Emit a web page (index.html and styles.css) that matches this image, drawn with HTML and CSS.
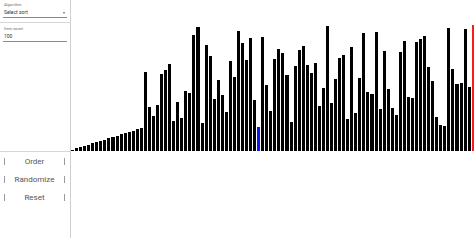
FILE: index.html
```html
<!DOCTYPE html>
<html>
<head>
<meta charset="utf-8">
<link rel="stylesheet" href="styles.css">
</head>
<body>
<div class="app">
  <aside class="side">
    <div class="settings">
      <div class="field first">
        <div class="label">Algorithm</div>
        <div class="control"><span>Select sort</span><span class="arrow"></span></div>
      </div>
      <div class="field second">
        <div class="label">Item count</div>
        <div class="control"><span>100</span></div>
      </div>
    </div>
    <div class="actions">
      <div class="row"><button class="btn">Order</button></div>
      <div class="row"><button class="btn">Randomize</button></div>
      <div class="row"><button class="btn">Reset</button></div>
    </div>
  </aside>
  <main class="main">
    <div class="chart">
      <div class="bar" style="height:1px"></div>
      <div class="bar" style="height:3px"></div>
      <div class="bar" style="height:4px"></div>
      <div class="bar" style="height:5px"></div>
      <div class="bar" style="height:6px"></div>
      <div class="bar" style="height:8px"></div>
      <div class="bar" style="height:9px"></div>
      <div class="bar" style="height:10px"></div>
      <div class="bar" style="height:11px"></div>
      <div class="bar" style="height:13px"></div>
      <div class="bar" style="height:14px"></div>
      <div class="bar" style="height:15px"></div>
      <div class="bar" style="height:17px"></div>
      <div class="bar" style="height:18px"></div>
      <div class="bar" style="height:19px"></div>
      <div class="bar" style="height:20px"></div>
      <div class="bar" style="height:22px"></div>
      <div class="bar" style="height:23px"></div>
      <div class="bar" style="height:79px"></div>
      <div class="bar" style="height:44px"></div>
      <div class="bar" style="height:35px"></div>
      <div class="bar" style="height:46px"></div>
      <div class="bar" style="height:77px"></div>
      <div class="bar" style="height:81px"></div>
      <div class="bar" style="height:87px"></div>
      <div class="bar" style="height:30px"></div>
      <div class="bar" style="height:49px"></div>
      <div class="bar" style="height:33px"></div>
      <div class="bar" style="height:60px"></div>
      <div class="bar" style="height:58px"></div>
      <div class="bar" style="height:116px"></div>
      <div class="bar" style="height:124px"></div>
      <div class="bar" style="height:28px"></div>
      <div class="bar" style="height:106px"></div>
      <div class="bar" style="height:95px"></div>
      <div class="bar" style="height:52px"></div>
      <div class="bar" style="height:71px"></div>
      <div class="bar" style="height:56px"></div>
      <div class="bar" style="height:39px"></div>
      <div class="bar" style="height:90px"></div>
      <div class="bar" style="height:74px"></div>
      <div class="bar" style="height:120px"></div>
      <div class="bar" style="height:108px"></div>
      <div class="bar" style="height:91px"></div>
      <div class="bar" style="height:113px"></div>
      <div class="bar" style="height:51px"></div>
      <div class="bar current" style="height:24px"></div>
      <div class="bar" style="height:114px"></div>
      <div class="bar" style="height:66px"></div>
      <div class="bar" style="height:40px"></div>
      <div class="bar" style="height:92px"></div>
      <div class="bar" style="height:102px"></div>
      <div class="bar" style="height:98px"></div>
      <div class="bar" style="height:76px"></div>
      <div class="bar" style="height:29px"></div>
      <div class="bar" style="height:85px"></div>
      <div class="bar" style="height:101px"></div>
      <div class="bar" style="height:105px"></div>
      <div class="bar" style="height:86px"></div>
      <div class="bar" style="height:78px"></div>
      <div class="bar" style="height:88px"></div>
      <div class="bar" style="height:45px"></div>
      <div class="bar" style="height:63px"></div>
      <div class="bar" style="height:125px"></div>
      <div class="bar" style="height:48px"></div>
      <div class="bar" style="height:72px"></div>
      <div class="bar" style="height:93px"></div>
      <div class="bar" style="height:96px"></div>
      <div class="bar" style="height:32px"></div>
      <div class="bar" style="height:104px"></div>
      <div class="bar" style="height:38px"></div>
      <div class="bar" style="height:73px"></div>
      <div class="bar" style="height:118px"></div>
      <div class="bar" style="height:59px"></div>
      <div class="bar" style="height:57px"></div>
      <div class="bar" style="height:119px"></div>
      <div class="bar" style="height:42px"></div>
      <div class="bar" style="height:100px"></div>
      <div class="bar" style="height:62px"></div>
      <div class="bar" style="height:43px"></div>
      <div class="bar" style="height:36px"></div>
      <div class="bar" style="height:99px"></div>
      <div class="bar" style="height:110px"></div>
      <div class="bar" style="height:54px"></div>
      <div class="bar" style="height:53px"></div>
      <div class="bar" style="height:109px"></div>
      <div class="bar" style="height:112px"></div>
      <div class="bar" style="height:115px"></div>
      <div class="bar" style="height:84px"></div>
      <div class="bar" style="height:70px"></div>
      <div class="bar" style="height:34px"></div>
      <div class="bar" style="height:26px"></div>
      <div class="bar" style="height:25px"></div>
      <div class="bar" style="height:123px"></div>
      <div class="bar" style="height:82px"></div>
      <div class="bar" style="height:67px"></div>
      <div class="bar" style="height:68px"></div>
      <div class="bar" style="height:122px"></div>
      <div class="bar" style="height:64px"></div>
      <div class="bar scan" style="height:126px"></div>
    </div>
  </main>
</div>
</body>
</html>
```

FILE: styles.css
```css
* { box-sizing: border-box; }
html, body { margin: 0; padding: 0; background: #fff; }
body { font-family: Roboto, "Noto Sans", sans-serif; color: #333; }

.app {
  display: grid;
  grid-template-columns: 71px 1fr;
  height: 238px;
  width: 474px;
}

.side {
  border-right: 1px solid #cfcfcf;
  display: flex;
  flex-direction: column;
}

.settings {
  height: 152px;
  border-bottom: 1px solid #d6d6d6;
}

.field {
  padding: 2px 3px 0 3px;
}
.field.first {
  height: 23px;
  border-bottom: 1px solid #d6d6d6;
}
.field.second {
  padding-top: 3px;
}

.label {
  font-size: 4px;
  line-height: 6px;
  color: #6f6f6f;
  padding-left: 1px;
}

.control {
  margin-top: 1px;
  height: 9px;
  line-height: 6px;
  font-size: 5px;
  color: #333;
  border-bottom: 1px solid #8a8a8a;
  padding-left: 1px;
  display: flex;
  justify-content: space-between;
  align-items: flex-start;
}

.arrow {
  margin-top: 3px;
  margin-right: 2px;
  width: 0;
  height: 0;
  border-left: 1.5px solid transparent;
  border-right: 1.5px solid transparent;
  border-top: 2px solid #666;
}

.actions {
  display: flex;
  flex-direction: column;
}

.row {
  height: 18px;
  display: flex;
  align-items: center;
}

.btn {
  margin: 0 5px 0 4px;
  width: 61px;
  height: 7px;
  padding: 0;
  border: none;
  border-left: 1px solid #9a9a9a;
  border-right: 1px solid #9a9a9a;
  background: transparent;
  font-family: Roboto, "Noto Sans", sans-serif;
  font-size: 8px;
  line-height: 7px;
  color: #555;
  text-align: center;
}

.main {
  display: flex;
  flex-direction: column;
}

.chart {
  height: 151px;
  display: flex;
  align-items: flex-end;
  gap: 1px;
}

.bar {
  flex: 1 1 0;
  background: #000;
}
.bar.current { background: #0a14ff; }
.bar.scan { background: #ff1a1a; }
```
